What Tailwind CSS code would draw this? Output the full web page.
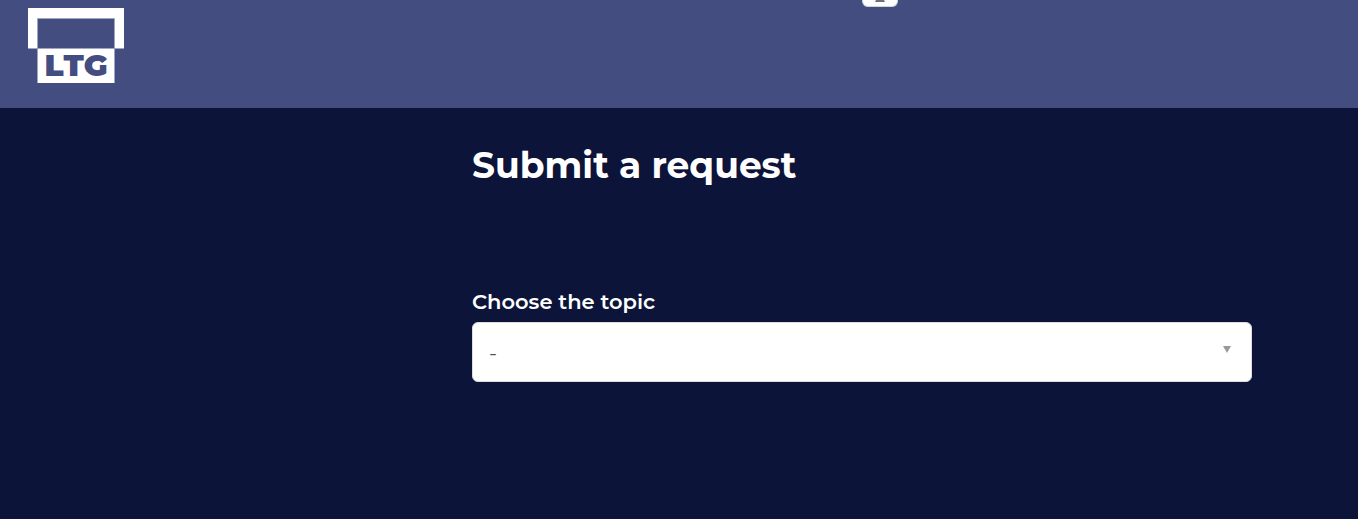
<!DOCTYPE html>
<html lang="en">
<head>
<meta charset="utf-8">
<meta name="viewport" content="width=device-width,initial-scale=1">
<title>Submit a request</title>
<script src="https://cdn.jsdelivr.net/npm/@tailwindcss/browser@4"></script>
</head>
<body class="min-h-screen bg-[#0c1439] font-[Montserrat,Inter,sans-serif] text-white">

<!-- Header -->
<header class="relative h-27 bg-[#434d80] px-7 pt-2">
  <a href="#" aria-label="LTG" class="inline-block">
    <svg class="block" width="96" height="75" viewBox="0 0 96 75">
      <path fill="#fff" d="M0 0H96V40.500H86.500V10.500H9.500V40.500H0Z"/>
      <path fill="#fff" d="M9.500 41H86.500V75H9.500Z"/>
      <path fill="none" stroke="#a1a6c0" stroke-width="1" d="M9.500 40.500V10.500H86.500V40.500Z"/>
      <text x="48" y="68" text-anchor="middle" class="font-[Montserrat,Inter,sans-serif] text-[31px] font-black [font-kerning:none]" fill="#434d80">LTG</text>
    </svg>
  </a>
  <!-- Pull-down tab -->
  <button type="button" aria-label="Toggle toolbar" class="absolute top-0 left-[862px] flex h-[7px] w-9 justify-center rounded-b-md border border-t-0 border-gray-300 bg-white">
    <svg width="12" height="2" viewBox="0 0 12 2"><path fill="#68737d" d="M2 0H10L11 2H1Z"/></svg>
  </button>
</header>

<!-- Request form -->
<main class="mx-auto flex max-w-[1146px] justify-end">
  <div class="w-full max-w-[780px] pt-9">
    <h1 class="text-4xl leading-[42px] font-bold">Submit a request</h1>
    <form class="mt-[102px]">
      <label for="topic" class="block text-[21px] leading-7 font-semibold">Choose the topic</label>
      <div class="relative mt-1.5">
        <select id="topic" class="block h-15 w-full appearance-none rounded-md border border-[#ddd] bg-white pt-0.5 pr-10 pl-4 text-[21px] text-[#555]">
          <option>-</option>
        </select>
        <svg class="pointer-events-none absolute top-6 right-5" width="10" height="7" viewBox="0 0 10 7"><path fill="#999" d="M1 0H9L5 7Z"/></svg>
      </div>
    </form>
  </div>
</main>

</body>
</html>
